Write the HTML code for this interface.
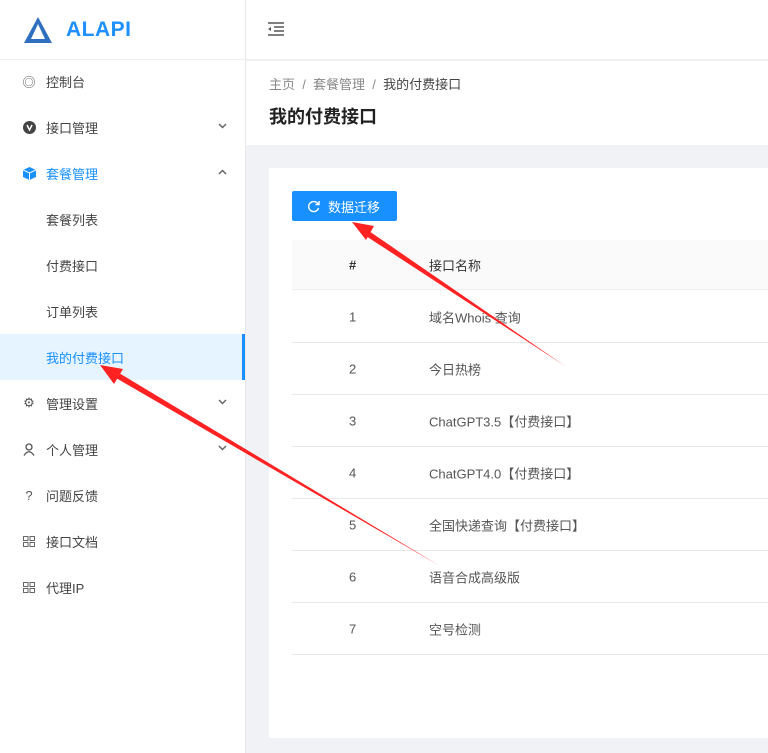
<!DOCTYPE html><html><head><meta charset="utf-8"><style>
*{margin:0;padding:0;box-sizing:border-box}
body{width:768px;height:753px;overflow:hidden;background:#f0f2f5;font-family:"Liberation Sans","Noto Sans CJK SC",sans-serif;font-size:13px;color:#444;position:relative}
.side{position:absolute;left:0;top:0;width:246px;height:753px;background:#fff;border-right:1px solid #e8e8e8}
.logo{height:60px;border-bottom:1px solid #eee;display:flex;align-items:center;padding-left:23px;margin-bottom:-2px}
.logo b{color:#1e90ff;font-size:21px;margin-left:13px;letter-spacing:.5px}
.mi{height:46px;display:flex;align-items:center;padding-left:22px;color:#444;position:relative}
.mi .ic{width:14px;margin-right:10px;display:flex;justify-content:center;color:#555}
.mi .ar{position:absolute;right:18px;top:19px}
.sub{padding-left:46px}
.act{background:#e6f4ff;color:#1890ff;border-right:3px solid #1890ff}
.top{position:absolute;left:246px;top:0;right:0;height:60px;background:#fff;border-bottom:1px solid #eee}
.bc{position:absolute;left:246px;top:61px;right:0;height:84px;background:#fff}
.bc .p{position:absolute;left:23px;top:13px;color:#888}
.bc h1{position:absolute;left:23px;top:42px;font-size:18px;color:#222}
.card{position:absolute;left:269px;top:168px;width:499px;height:570px;background:#fff}
.btn{position:absolute;left:23px;top:23px;width:105px;height:30px;background:#1890ff;border-radius:2px;color:#fff;display:flex;align-items:center;padding-left:15px}
.th{position:absolute;left:23px;top:72px;right:0;height:50px;background:#fafafa;border-bottom:1px solid #eee;color:#333}
.r{position:absolute;left:23px;right:0;height:52px;border-bottom:1px solid #e8e8e8;color:#555}
.c1{position:absolute;left:57px;top:50%;transform:translateY(-50%)}
.c2{position:absolute;left:137px;top:50%;transform:translateY(-50%)}
</style></head><body>
<div class="side">
<div class="logo"><svg width="30" height="28" viewBox="0 0 30 28"><path d="M15 1 L29 27 L1 27 Z M15 8 L8 23 L22 23 Z" fill="#2f6fbf" fill-rule="evenodd"/><path d="M15 12 L20 21 L10 21Z" fill="#fff"/></svg><b>ALAPI</b></div>
<div class="mi"><span class="ic">◎</span>控制台</div>
<div class="mi"><span class="ic"><svg width="13" height="13"><circle cx="6.5" cy="6.5" r="6.5" fill="#444"/><path d="M4 4 L6.5 9 L9 4" stroke="#fff" stroke-width="1.5" fill="none"/></svg></span>接口管理<svg class="ar" width="9" height="6"><path d="M1 1L4.5 4.5L8 1" stroke="#666" stroke-width="1.5" fill="none"/></svg></div>
<div class="mi" style="color:#1890ff"><span class="ic"><svg width="13" height="13"><path d="M6.5 0 L13 3 L13 10 L6.5 13 L0 10 L0 3Z" fill="#1890ff"/><path d="M0 3 L6.5 6 L13 3 M6.5 6 V13" stroke="#fff" stroke-width="1" fill="none"/></svg></span>套餐管理<svg class="ar" width="9" height="6"><path d="M1 5L4.5 1.5L8 5" stroke="#666" stroke-width="1.5" fill="none"/></svg></div>
<div class="mi sub">套餐列表</div>
<div class="mi sub">付费接口</div>
<div class="mi sub">订单列表</div>
<div class="mi sub act">我的付费接口</div>
<div class="mi"><span class="ic">⚙</span>管理设置<svg class="ar" width="9" height="6"><path d="M1 1L4.5 4.5L8 1" stroke="#666" stroke-width="1.5" fill="none"/></svg></div>
<div class="mi"><span class="ic"><svg width="12" height="13"><circle cx="6" cy="4" r="3" stroke="#555" stroke-width="1.3" fill="none"/><path d="M1 12.5 Q6 5 11 12.5" stroke="#555" stroke-width="1.3" fill="none"/></svg></span>个人管理<svg class="ar" width="9" height="6"><path d="M1 1L4.5 4.5L8 1" stroke="#666" stroke-width="1.5" fill="none"/></svg></div>
<div class="mi"><span class="ic">?</span>问题反馈</div>
<div class="mi"><span class="ic"><svg width="12" height="11"><path d="M0.5 0.5h4.5v4h-4.5zM7 0.5h4.5v4h-4.5zM0.5 6.5h4.5v4h-4.5zM7 6.5h4.5v4h-4.5z" stroke="#666" fill="none"/></svg></span>接口文档</div>
<div class="mi"><span class="ic"><svg width="12" height="11"><path d="M0.5 0.5h4.5v4h-4.5zM7 0.5h4.5v4h-4.5zM0.5 6.5h4.5v4h-4.5zM7 6.5h4.5v4h-4.5z" stroke="#666" fill="none"/></svg></span>代理IP</div>
</div>
<div class="top"><svg style="position:absolute;left:21px;top:21px" width="18" height="16"><path d="M1 2H17M7 6H17M7 10H17M1 14H17" stroke="#555" stroke-width="1.5"/><path d="M1 8 L4 6 V10Z" fill="#555"/></svg></div>
<div class="bc"><div class="p">主页 &nbsp;/&nbsp; 套餐管理 &nbsp;/&nbsp; <span style="color:#444">我的付费接口</span></div><h1>我的付费接口</h1></div>
<div class="card">
<div class="btn"><svg width="13" height="13" style="margin-right:8px"><path d="M11 4A5 5 0 1 0 11.5 8" stroke="#fff" stroke-width="1.4" fill="none"/><path d="M12 1V4.5H8.5" stroke="#fff" stroke-width="1.4" fill="none"/></svg>数据迁移</div>
<div class="th"><span class="c1" style="font-weight:bold">#</span><span class="c2">接口名称</span></div>
<div class="r" style="top:123px"><span class="c1">1</span><span class="c2">域名Whois 查询</span></div>
<div class="r" style="top:175px"><span class="c1">2</span><span class="c2">今日热榜</span></div>
<div class="r" style="top:227px"><span class="c1">3</span><span class="c2">ChatGPT3.5【付费接口】</span></div>
<div class="r" style="top:279px"><span class="c1">4</span><span class="c2">ChatGPT4.0【付费接口】</span></div>
<div class="r" style="top:331px"><span class="c1">5</span><span class="c2">全国快递查询【付费接口】</span></div>
<div class="r" style="top:383px"><span class="c1">6</span><span class="c2">语音合成高级版</span></div>
<div class="r" style="top:435px"><span class="c1">7</span><span class="c2">空号检测</span></div>
</div>
<svg style="position:absolute;left:0;top:0" width="768" height="753">
<polygon points="565,366 366,236 369,231" fill="#f22"/><polygon points="352,222 374,226 366,240" fill="#f22"/>
<polygon points="440,566 116,378 119,373" fill="#f22"/><polygon points="100,365 123,369 114,384" fill="#f22"/>
</svg>
</body></html>
